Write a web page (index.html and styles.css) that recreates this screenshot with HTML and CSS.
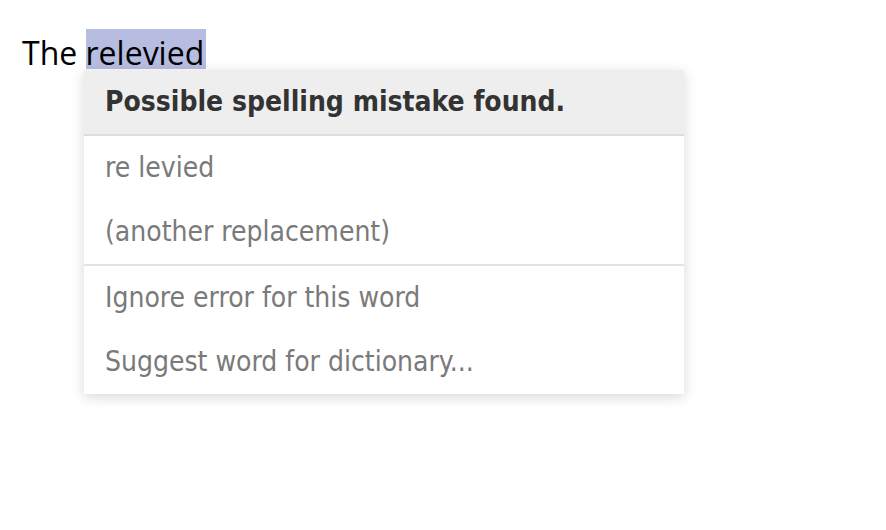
FILE: index.html
```html
<!DOCTYPE html>
<html lang="en">
<head>
<meta charset="utf-8">
<title>Spelling suggestions</title>
<link rel="stylesheet" href="styles.css">
</head>
<body>
<div class="editor">
  <p class="line">The <span class="sel">relevied</span></p>
  <section class="popover">
    <header class="pop-title">Possible spelling mistake found.</header>
    <ul class="pop-list">
      <li class="pop-option">re levied</li>
      <li class="pop-option">(another replacement)</li>
    </ul>
    <ul class="pop-list pop-list-sep">
      <li class="pop-option">Ignore error for this word</li>
      <li class="pop-option">Suggest word for dictionary...</li>
    </ul>
  </section>
</div>
</body>
</html>
```
FILE: styles.css
```css
html, body {
  margin: 0;
  padding: 0;
  background: #ffffff;
}
.editor {
  position: relative;
  padding: 29px 0 0 22px;
  min-height: 450px;
}
.line {
  margin: 0;
  font-family: "Open Sans", "Noto Sans", sans-serif;
  font-size: 32px;
  line-height: 47px;
  color: #000000;
}
.sel {
  display: inline-block;
  vertical-align: baseline;
  background: #b6bde0;
  height: 40px;
  line-height: 47px;
  padding-right: 2px;
}
.popover {
  position: absolute;
  left: 84px;
  top: 70px;
  width: 600px;
  background: #ffffff;
  box-shadow: 0 3px 12px rgba(0, 0, 0, 0.16);
  font-family: "DejaVu Sans Condensed", "DejaVu Sans", sans-serif;
  font-size: 28px;
}
.pop-title {
  display: block;
  height: 64px;
  line-height: 64px;
  padding-left: 21px;
  background: #eeeeee;
  border-bottom: 2px solid #dddddd;
  color: #333333;
  font-weight: bold;
}
.pop-list {
  list-style: none;
  margin: 0;
  padding: 0;
}
.pop-list-sep {
  border-top: 2px solid #e4e4e4;
}
.pop-option {
  height: 64px;
  line-height: 64px;
  padding-left: 21px;
  color: #7a7a7a;
}
```
